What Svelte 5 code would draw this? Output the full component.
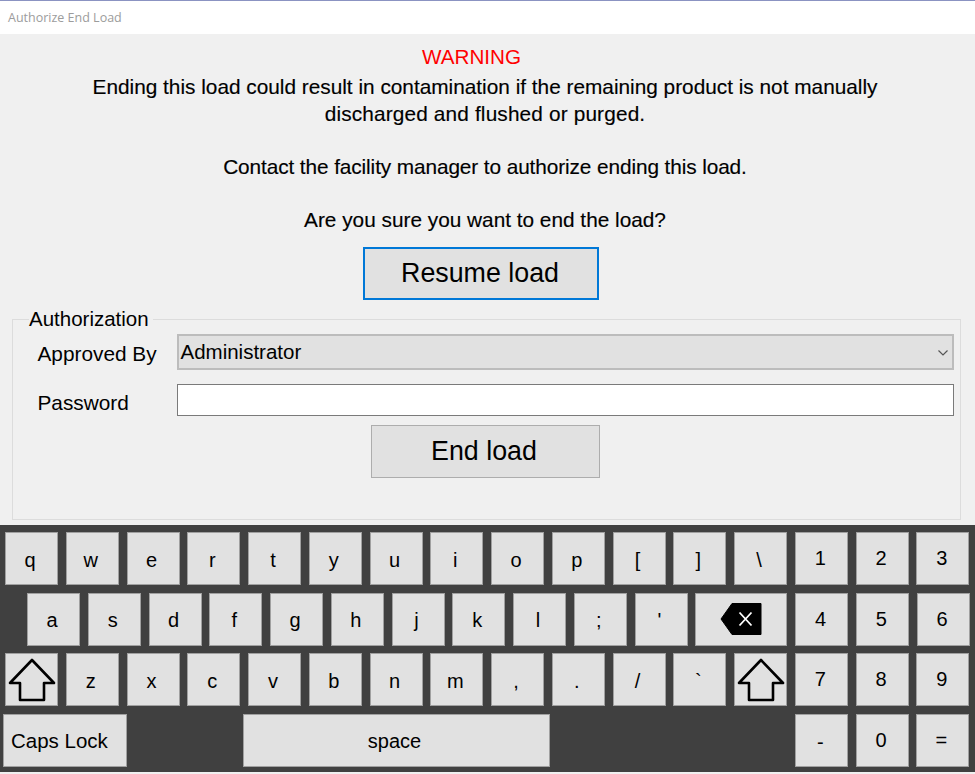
<script>
  const rows = [
    { cls: 'r1', keys: ['q','w','e','r','t','y','u','i','o','p','[',']','\\','1','2','3'] },
    { cls: 'r2', keys: ['a','s','d','f','g','h','j','k','l',';',"'",'BACK','4','5','6'] },
    { cls: 'r3', keys: ['SHIFT','z','x','c','v','b','n','m',',','.','/','`','SHIFT','7','8','9'] }
  ];
  const isDigit = (k) => /^[0-9]$/.test(k);
</script>

{#snippet shift()}
  <svg class="shift" viewBox="0 0 48 44" width="48" height="44" aria-hidden="true">
    <path d="M24 2 L46 25 H36 V42 H12 V25 H2 Z" fill="none" stroke="#000" stroke-width="2.600" stroke-linejoin="round"/>
  </svg>
{/snippet}

{#snippet back()}
  <svg viewBox="0 0 42 32" width="42" height="32" aria-hidden="true">
    <path d="M12 0.500 H41 V31.500 H12 L1 16 Z" fill="#000" stroke="#000" stroke-linejoin="round"/>
    <path d="M19.500 9.500 L31.500 22.500 M31.500 9.500 L19.500 22.500" stroke="#fff" stroke-width="1.800" fill="none"/>
  </svg>
{/snippet}

<div class="window">
  <header class="title">Authorize End Load</header>

  <main class="content">
    <p class="warning">WARNING</p>
    <p class="msg">Ending this load could result in contamination if the remaining product is not manually<br><span class="wide">discharged and flushed or purged.</span><br><br><span class="tight">Contact the facility manager to authorize ending this load.</span><br><br>Are you sure you want to end the load?</p>
    <button class="btn resume">Resume load</button>

    <fieldset class="auth">
      <legend>Authorization</legend>
      <div class="field approved">
        <span class="lbl">Approved By</span>
        <div class="select">
          <span>Administrator</span>
          <svg viewBox="0 0 10 6" width="10" height="6" aria-hidden="true"><path d="M0.500 0.500 L5 5 L9.500 0.500" fill="none" stroke="#555" stroke-width="1.200"/></svg>
        </div>
      </div>
      <div class="field password">
        <span class="lbl">Password</span>
        <input type="password" aria-label="Password" />
      </div>
      <button class="btn end">End load</button>
    </fieldset>
  </main>

  <section class="keyboard">
    {#each rows as row}
      <div class="row {row.cls}">
        {#each row.keys as k}
          {#if k === 'SHIFT'}
            <button class="key">{@render shift()}</button>
          {:else if k === 'BACK'}
            <button class="key backspace">{@render back()}</button>
          {:else}
            <button class="key" class:letter={!isDigit(k)} class:digit={isDigit(k)}>{k}</button>
          {/if}
        {/each}
      </div>
    {/each}
    <div class="row r4">
      <button class="key caps">Caps Lock</button>
      <button class="key space">space</button>
      <button class="key minus">-</button>
      <button class="key digit">0</button>
      <button class="key equals">=</button>
    </div>
  </section>
</div>

<style>
  :global(body) {
    margin: 0;
    background: #f0f0f0;
  }
  .window {
    width: 975px;
    height: 774px;
    display: flex;
    flex-direction: column;
    font-family: "Liberation Sans", Arial, sans-serif;
    color: #000;
    background: #f0f0f0;
    overflow: hidden;
  }
  .title {
    box-sizing: border-box;
    height: 34px;
    border-top: 1px solid #8b93c2;
    background: #fff;
    padding: 10px 0 0 8px;
    font: 12.500px/14px "Open Sans", sans-serif;
    color: #9c9c9c;
  }
  .content {
    flex: 1;
    display: flex;
    flex-direction: column;
    align-items: center;
    min-height: 0;
  }
  p {
    margin: 0;
  }
  .warning {
    font-size: 20.700px;
    line-height: 26px;
    color: #f00;
    margin: 10px 0 0 -32px;
  }
  .msg {
    font-size: 20.800px;
    line-height: 26.500px;
    text-align: center;
    white-space: nowrap;
    margin: 4px 0 0 -5px;
    -webkit-text-stroke: 0.150px #000;
  }
  .wide {
    letter-spacing: 0.150px;
  }
  .tight {
    letter-spacing: -0.100px;
  }
  .btn {
    box-sizing: border-box;
    font-family: inherit;
    color: #000;
    background: #e1e1e1;
    border: 1px solid #adadad;
    padding: 0;
    font-size: 26.800px;
  }
  .resume {
    width: 236px;
    height: 53px;
    margin: 14px 0 0 -13px;
    border: 2px solid #0078d7;
    padding-right: 2px;
  }
  .auth {
    box-sizing: border-box;
    width: 949px;
    height: 213px;
    margin: 7px 0 0 -2px;
    padding: 3px 6px 0 25px;
    border: 1px solid #dcdcdc;
    min-width: 0;
    display: block;
  }
  legend {
    padding: 0 4px 0 0;
    margin-left: -9px;
    font-size: 20.500px;
    line-height: 24px;
  }
  .field {
    display: flex;
    align-items: center;
  }
  .lbl {
    width: 139px;
    font-size: 20.800px;
    white-space: nowrap;
    margin-left: -0.500px;
  }
  .approved {
    height: 36px;
  }
  .approved .lbl {
    padding-top: 3px;
  }
  .select {
    box-sizing: border-box;
    flex: 1;
    height: 36px;
    display: flex;
    align-items: center;
    justify-content: space-between;
    padding: 0 4px 0 2px;
    border: 2px solid #bcbcbc;
    background: #e1e1e1;
    font-size: 20.500px;
  }
  .select svg {
    margin-top: 2px;
  }
  .password {
    height: 32px;
    margin-top: 14px;
  }
  .password .lbl {
    padding-top: 5px;
  }
  input {
    box-sizing: border-box;
    flex: 1;
    min-width: 0;
    height: 32px;
    border: 1px solid #7a7a7a;
    background: #fff;
    padding: 0;
    outline: none;
  }
  .end {
    display: block;
    width: 229px;
    height: 53px;
    margin: 9px 0 0 333px;
    padding-right: 3px;
  }
  .keyboard {
    box-sizing: border-box;
    height: 247px;
    margin-bottom: 2px;
    background: #404040;
    padding: 7px 0 0 5px;
    display: flex;
    flex-direction: column;
    gap: 7.700px;
  }
  .row {
    display: flex;
    gap: 7.750px;
    height: 53px;
  }
  .r2 {
    padding-left: 22px;
  }
  .key {
    box-sizing: border-box;
    flex: none;
    width: 53px;
    height: 53px;
    padding: 0;
    display: flex;
    align-items: center;
    justify-content: center;
    background: #e1e1e1;
    border: 1px solid #a0a0a0;
    font-family: inherit;
    font-size: 20px;
    color: #000;
    overflow: hidden;
  }
  .letter {
    padding: 3px 3px 0 0;
  }
  .digit {
    padding-right: 2px;
  }
  .backspace {
    width: 92px;
  }
  .shift {
    flex: none;
  }
  .caps {
    width: 124px;
    margin-left: -2px;
    justify-content: flex-start;
    padding-left: 7px;
    font-size: 20.500px;
  }
  .space {
    width: 307px;
    margin-left: 108.300px;
    padding: 2px 4px 0 0;
  }
  .minus {
    margin-left: 237px;
    padding: 3px 2px 0 0;
  }
  .equals {
    padding-right: 3px;
  }
</style>
